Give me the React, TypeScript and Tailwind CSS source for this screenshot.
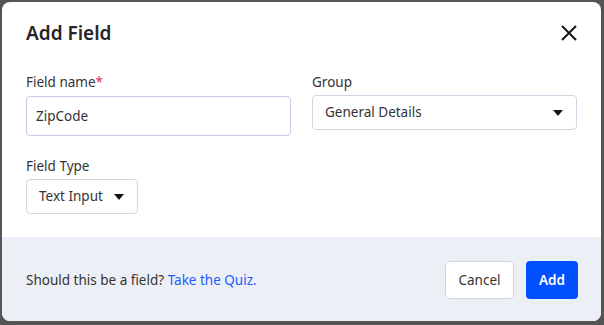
import React from "react";

function Caret() {
  return (
    <svg width="10" height="6" viewBox="0 0 10 6" className="shrink-0">
      <path d="M0 0 L10 0 L5 6 Z" fill="#161616" />
    </svg>
  );
}

export default function App() {
  return (
    <div
      className="w-[604px] h-[325px] bg-[#555555] pt-[2px] pl-[2px] pr-[3px] pb-[4px]"
      style={{ fontFamily: '"Noto Sans", "Liberation Sans", sans-serif' }}
    >
      <div className="w-full h-full bg-white rounded-[8px] overflow-hidden flex flex-col">
        <div className="flex-1 px-[24px] pt-[18px]">
          <div className="flex items-center justify-between">
            <h1 className="text-[19px] font-semibold text-[#262626] leading-[26px]">Add Field</h1>
            <svg width="18" height="18" viewBox="0 0 18 18" className="mr-[-1px]">
              <path d="M2 2 L16 16 M16 2 L2 16" stroke="#161616" strokeWidth="2" />
            </svg>
          </div>
          <div className="flex gap-[21px] mt-[27px]">
            <div className="w-[266px]">
              <div className="text-[13.5px] text-[#333] leading-[18px]">
                Field name<span className="text-[#e0245e]">*</span>
              </div>
              <div className="mt-[5px] h-[40px] border border-[#c5cbe0] rounded-[4px] flex items-center px-[9px] text-[13.5px] text-[#333]">
                ZipCode
              </div>
            </div>
            <div className="w-[266px]">
              <div className="text-[13.5px] text-[#333] leading-[18px]">Group</div>
              <div className="mt-[4px] h-[35px] border border-[#d2d6e4] rounded-[4px] flex items-center justify-between pl-[12px] pr-[13px] text-[13.5px] text-[#333]">
                General Details
                <Caret />
              </div>
            </div>
          </div>
          <div className="mt-[21px]">
            <div className="text-[13.5px] text-[#333] leading-[18px]">Field Type</div>
            <div className="mt-[4px] w-[112px] h-[35px] border border-[#d2d6e4] rounded-[4px] flex items-center justify-between pl-[12px] pr-[13px] text-[13.5px] text-[#333]">
              Text Input
              <Caret />
            </div>
          </div>
        </div>
        <div className="h-[84px] bg-[#eceff6] flex items-center justify-between pl-[24px] pr-[23px] pt-[2px]">
          <div className="text-[13.5px] text-[#333]">
            Should this be a field? <span className="text-[#1a5cff]">Take the Quiz.</span>
          </div>
          <div className="flex gap-[12px]">
            <button className="h-[38px] w-[69px] bg-white border border-[#d2d6e4] rounded-[4px] text-[13.5px] text-[#333]">
              Cancel
            </button>
            <button className="h-[38px] w-[52px] bg-[#0050ff] rounded-[4px] text-[13.5px] font-semibold text-white">
              Add
            </button>
          </div>
        </div>
      </div>
    </div>
  );
}
